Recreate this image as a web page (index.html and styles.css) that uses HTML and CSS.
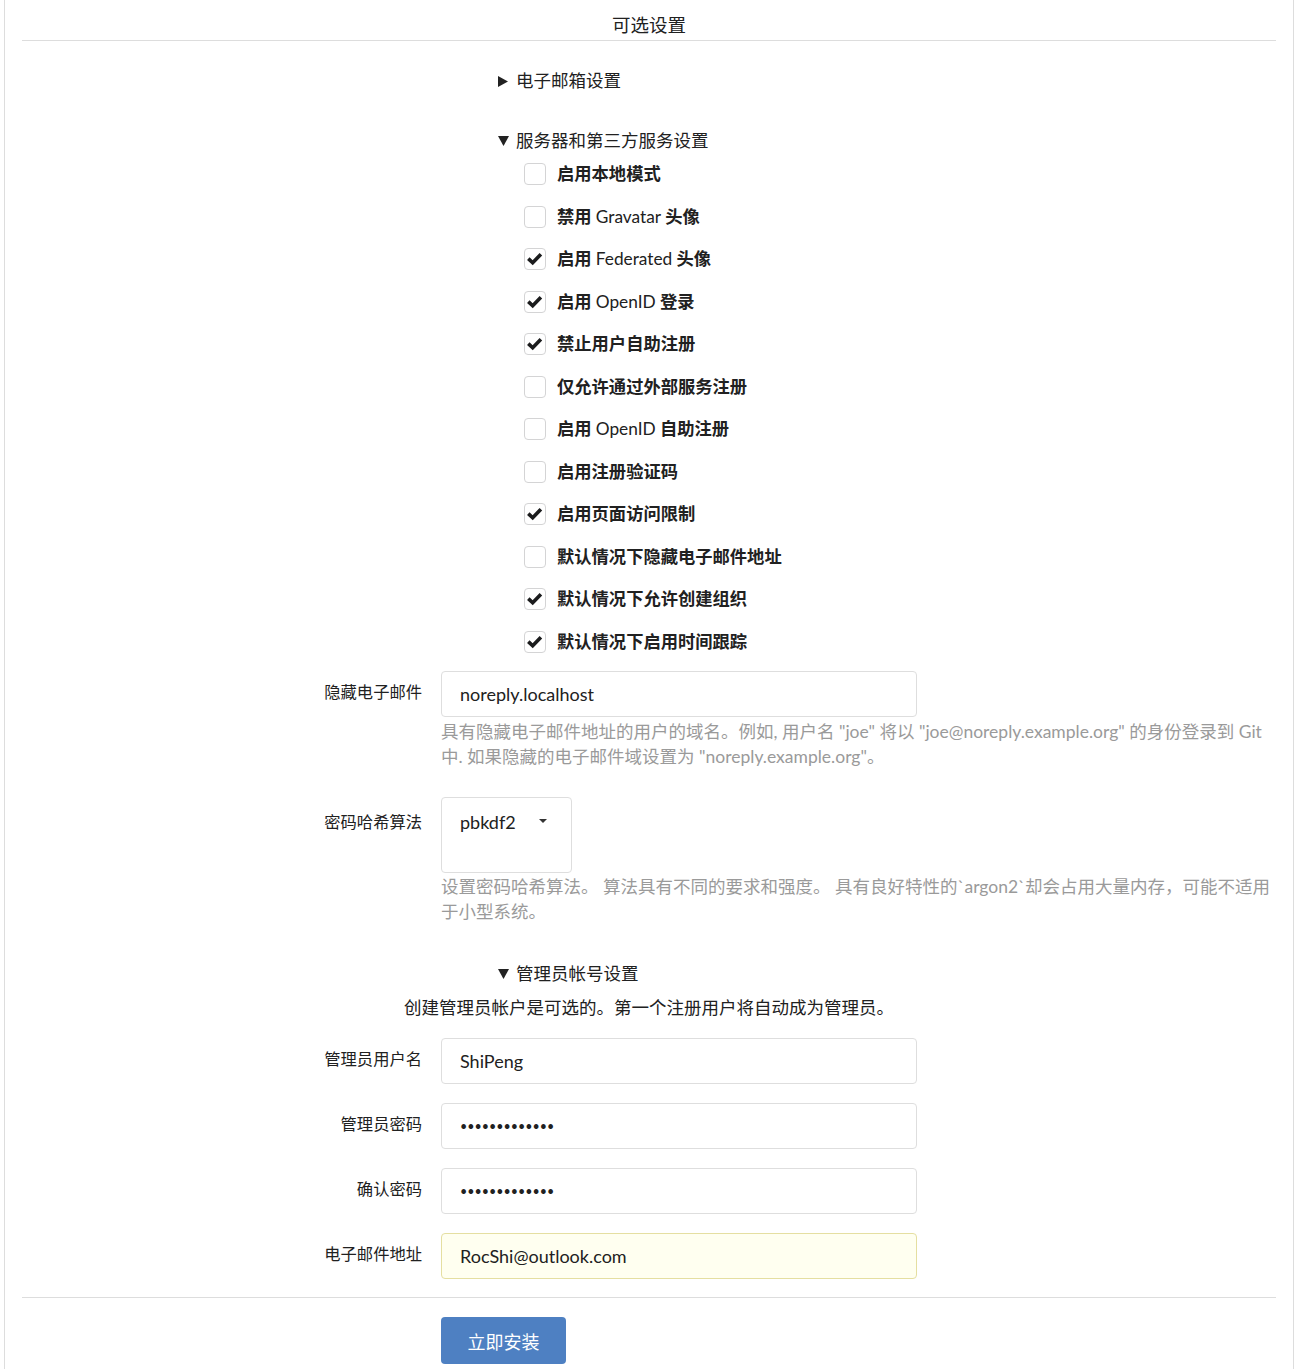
FILE: index.html
```html
<!DOCTYPE html>
<html lang="zh-CN">
<head>
<meta charset="utf-8">
<title>安装</title>
<link rel="stylesheet" href="styles.css">
</head>
<body>
<div class="page">
  <h4 class="header">可选设置</h4>

  <details class="group g-mail">
    <summary><span class="tri"><svg width="10" height="11" viewBox="0 0 10 11"><path d="M0 0 L10 5.5 L0 11 Z" fill="#222"/></svg></span>电子邮箱设置</summary>
  </details>

  <details class="group g-server" open>
    <summary><span class="tri"><svg width="11" height="10" viewBox="0 0 11 10"><path d="M0 0 L11 0 L5.5 10 Z" fill="#222"/></svg></span>服务器和第三方服务设置</summary>
    <div class="checks">
      <label class="check"><span class="box"></span><span class="txt">启用本地模式</span></label>
      <label class="check"><span class="box"></span><span class="txt">禁用 <span class="lat">Gravatar</span> 头像</span></label>
      <label class="check"><span class="box on"><svg width="22" height="22" viewBox="0 0 22 22"><path d="M4.3 10.6 L8.7 14.8 L16.9 6.2" fill="none" stroke="#1b1c1d" stroke-width="3.6"/></svg></span><span class="txt">启用 <span class="lat">Federated</span> 头像</span></label>
      <label class="check"><span class="box on"><svg width="22" height="22" viewBox="0 0 22 22"><path d="M4.3 10.6 L8.7 14.8 L16.9 6.2" fill="none" stroke="#1b1c1d" stroke-width="3.6"/></svg></span><span class="txt">启用 <span class="lat">OpenID</span> 登录</span></label>
      <label class="check"><span class="box on"><svg width="22" height="22" viewBox="0 0 22 22"><path d="M4.3 10.6 L8.7 14.8 L16.9 6.2" fill="none" stroke="#1b1c1d" stroke-width="3.6"/></svg></span><span class="txt">禁止用户自助注册</span></label>
      <label class="check"><span class="box"></span><span class="txt">仅允许通过外部服务注册</span></label>
      <label class="check"><span class="box"></span><span class="txt">启用 <span class="lat">OpenID</span> 自助注册</span></label>
      <label class="check"><span class="box"></span><span class="txt">启用注册验证码</span></label>
      <label class="check"><span class="box on"><svg width="22" height="22" viewBox="0 0 22 22"><path d="M4.3 10.6 L8.7 14.8 L16.9 6.2" fill="none" stroke="#1b1c1d" stroke-width="3.6"/></svg></span><span class="txt">启用页面访问限制</span></label>
      <label class="check"><span class="box"></span><span class="txt">默认情况下隐藏电子邮件地址</span></label>
      <label class="check"><span class="box on"><svg width="22" height="22" viewBox="0 0 22 22"><path d="M4.3 10.6 L8.7 14.8 L16.9 6.2" fill="none" stroke="#1b1c1d" stroke-width="3.6"/></svg></span><span class="txt">默认情况下允许创建组织</span></label>
      <label class="check"><span class="box on"><svg width="22" height="22" viewBox="0 0 22 22"><path d="M4.3 10.6 L8.7 14.8 L16.9 6.2" fill="none" stroke="#1b1c1d" stroke-width="3.6"/></svg></span><span class="txt">默认情况下启用时间跟踪</span></label>
    </div>

    <div class="field f-first">
      <label class="flabel">隐藏电子邮件</label>
      <input class="input" type="text" value="noreply.localhost">
    </div>
    <p class="help h-first">具有隐藏电子邮件地址的用户的域名。例如, 用户名 "joe" 将以 "joe@noreply.example.org" 的身份登录到 Git<br>中. 如果隐藏的电子邮件域设置为 "noreply.example.org"。</p>

    <div class="field f-select">
      <label class="flabel l-select">密码哈希算法</label>
      <div class="select"><span class="stext">pbkdf2</span><span class="caret"></span></div>
    </div>
    <p class="help h-second">设置密码哈希算法。 算法具有不同的要求和强度。 具有良好特性的`argon2`却会占用大量内存，可能不适用<br>于小型系统。</p>
  </details>

  <details class="group g-admin" open>
    <summary><span class="tri"><svg width="11" height="10" viewBox="0 0 11 10"><path d="M0 0 L11 0 L5.5 10 Z" fill="#222"/></svg></span>管理员帐号设置</summary>
    <p class="desc">创建管理员帐户是可选的。第一个注册用户将自动成为管理员。</p>
    <div class="field f-admin">
      <label class="flabel">管理员用户名</label>
      <input class="input" type="text" value="ShiPeng">
    </div>
    <div class="field f-gap">
      <label class="flabel">管理员密码</label>
      <input class="input pw" type="password" value="1234567890123">
    </div>
    <div class="field f-gap">
      <label class="flabel">确认密码</label>
      <input class="input pw" type="password" value="1234567890123">
    </div>
    <div class="field f-gap">
      <label class="flabel">电子邮件地址</label>
      <input class="input auto" type="text" value="RocShi@outlook.com">
    </div>
  </details>

  <div class="divider"></div>
  <div class="actions">
    <button class="btn" type="button">立即安装</button>
  </div>
</div>
</body>
</html>
```

FILE: styles.css
```css
html, body {
  margin: 0;
  padding: 0;
  background: #fff;
}
body {
  font-family: Lato, "Noto Sans CJK SC", sans-serif;
  color: #212121;
}
.page {
  box-sizing: border-box;
  width: 1290px;
  margin: 0 4px;
  border-left: 1px solid #ddd;
  border-right: 1px solid #ddd;
  padding: 0 17px 10px;
  min-height: 1369px;
}
.header {
  margin: 0;
  height: 41px;
  box-sizing: border-box;
  padding-top: 13px;
  font-size: 18.5px;
  line-height: 24px;
  font-weight: normal;
  text-align: center;
  border-bottom: 1px solid #ddd;
}
.group {
  display: block;
}
.group summary {
  list-style: none;
  display: flex;
  align-items: center;
  margin-left: 476px;
  font-size: 17.5px;
  line-height: 24px;
  cursor: pointer;
}
.group summary::-webkit-details-marker {
  display: none;
}
.tri {
  display: inline-flex;
  width: 18px;
  align-items: center;
}
.tri svg {
  display: block;
}
.g-mail summary {
  margin-top: 28px;
}
.g-server summary {
  margin-top: 36px;
}
.g-admin summary {
  margin-top: 38.5px;
}
.checks {
  margin-left: 502px;
}
.check {
  display: flex;
  align-items: center;
  height: 42.5px;
}
.box {
  box-sizing: border-box;
  width: 22px;
  height: 22px;
  border: 1px solid #d4d4d5;
  border-radius: 4px;
  background: #fff;
  margin-right: 11px;
  position: relative;
}
.box svg {
  position: absolute;
  left: -1px;
  top: -1px;
}
.txt {
  font-size: 17.3px;
  font-weight: bold;
  line-height: 24px;
}
.lat {
  font-weight: normal;
}
.field {
  display: flex;
  align-items: flex-start;
}
.f-first {
  margin-top: 8px;
}
.f-select {
  margin-top: 28.5px;
}
.f-admin {
  margin-top: 18px;
}
.f-gap {
  margin-top: 19px;
}
.flabel {
  width: 400px;
  margin-right: 19px;
  text-align: right;
  font-size: 16.3px;
  line-height: 22px;
  padding-top: 10px;
  flex: none;
}
.l-select {
  padding-top: 14px;
}
.input {
  box-sizing: border-box;
  width: 476px;
  height: 46px;
  margin: 0;
  padding: 0 18px;
  border: 1px solid #dedede;
  border-radius: 4px;
  background: #fff;
  font-family: Lato, "Noto Sans CJK SC", sans-serif;
  font-size: 18px;
  color: #212121;
  outline: none;
}
.input.pw {
  font-size: 12.5px;
  letter-spacing: 0;
}
.input.auto {
  background: #fffff0;
  border-color: #e5dfa1;
}
.help {
  margin: 0 0 0 419px;
  font-size: 17.5px;
  line-height: 25px;
  color: #9a9a9a;
  white-space: nowrap;
}
.h-first {
  margin-top: 1.5px;
}
.h-second {
  margin-top: 0.5px;
}
.select {
  box-sizing: border-box;
  width: 131px;
  height: 76px;
  border: 1px solid #dedede;
  border-radius: 4px;
  padding: 12px 18px 0;
  display: flex;
  align-items: flex-start;
}
.stext {
  font-size: 18px;
  line-height: 24px;
}
.caret {
  width: 0;
  height: 0;
  border-left: 4px solid transparent;
  border-right: 4px solid transparent;
  border-top: 4px solid #333;
  margin-left: 23px;
  margin-top: 9px;
}
.desc {
  margin: 10px 0 0;
  text-align: center;
  font-size: 17.5px;
  line-height: 24px;
}
.divider {
  margin-top: 18px;
  border-top: 1px solid #ddd;
}
.actions {
  margin-top: 19px;
  padding-left: 419px;
}
.btn {
  box-sizing: border-box;
  width: 125px;
  height: 47px;
  border: none;
  border-radius: 4px;
  background: #4e80c2;
  color: #fff;
  font-family: Lato, "Noto Sans CJK SC", sans-serif;
  font-size: 18px;
  cursor: pointer;
}
```
